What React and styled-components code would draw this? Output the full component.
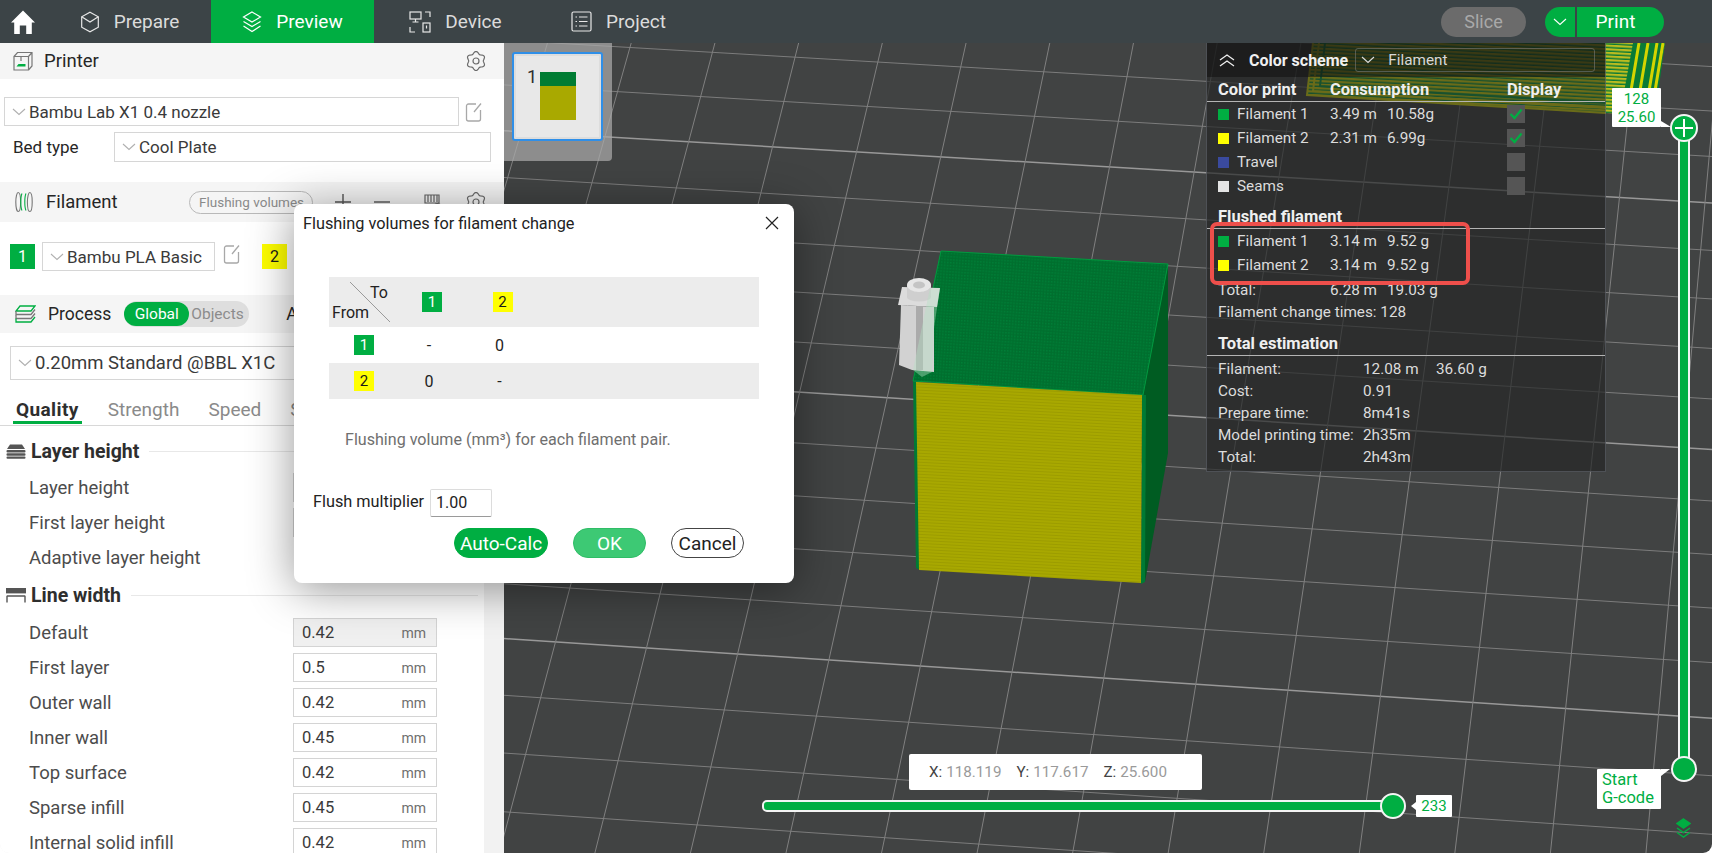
import React from "react";
import styled, { createGlobalStyle } from "styled-components";

const GREEN = "#00ae42";
const FONT = `Roboto, "Noto Sans", sans-serif`;

const Global = createGlobalStyle`
  html, body { margin: 0; padding: 0; background: #fff; overflow: hidden; }
  body { font-family: ${FONT}; }
  * { box-sizing: border-box; }
`;

/* ---------- icons ---------- */
const gearPath = (() => {
  let d = "";
  for (let i = 0; i < 72; i++) {
    const t = (i / 72) * Math.PI * 2;
    const r = 8.4 + 1.1 * Math.cos(6 * t);
    d += `${i ? "L" : "M"}${(10 + r * Math.sin(t)).toFixed(2)} ${(10 - r * Math.cos(t)).toFixed(2)}`;
  }
  return d + "Z";
})();

const Gear = () => (
  <svg width="20" height="20" viewBox="0 0 20 20" fill="none" stroke="#6b6b6b" strokeWidth="1.2">
    <path d={gearPath} />
    <circle cx="10" cy="10" r="3" />
  </svg>
);

const Chevron = ({ color = "#b0b0b0" }) => (
  <svg width="14" height="8" viewBox="0 0 14 8" fill="none" stroke={color} strokeWidth="1.1">
    <path d="M1 1l6 5.5L13 1" />
  </svg>
);

const EditIcon = () => (
  <svg width="19" height="20" viewBox="0 0 19 20" fill="none" stroke="#a8a8a8" strokeWidth="1.3">
    <path d="M11 2H3.5A2 2 0 0 0 1.5 4v13a2 2 0 0 0 2 2h10a2 2 0 0 0 2-2V8" />
    <path d="M9 10l7-8.5" />
  </svg>
);

const HomeIcon = () => (
  <svg width="26" height="26" viewBox="0 0 26 26" fill="#fff">
    <path d="M13 1.5L25 13.5h-3.2V25h-5.6v-8.5H9.8V25H4.2V13.5H1z" />
  </svg>
);

const PrepareIcon = () => (
  <svg width="20" height="22" viewBox="0 0 20 22" fill="none" stroke="#e8e8e8" strokeWidth="1.2">
    <path d="M10 1.2l8.3 4.6v10.4L10 20.8l-8.3-4.6V5.8z" />
    <path d="M1.7 5.8L10 11l8.3-5.2" />
  </svg>
);

const PreviewIcon = () => (
  <svg width="20" height="22" viewBox="0 0 20 22" fill="none" stroke="#fff" strokeWidth="1.2">
    <path d="M10 1l8.5 5L10 11 1.5 6z" />
    <path d="M1.5 10.5L10 15.5l8.5-5" />
    <path d="M1.5 15L10 20.5 18.5 15" />
  </svg>
);

const DeviceIcon = () => (
  <svg width="22" height="22" viewBox="0 0 22 22" fill="none" stroke="#e8e8e8" strokeWidth="1.2">
    <rect x="1" y="1" width="11" height="7" />
    <path d="M6.5 8v3M3.5 11h6" />
    <path d="M16 1h5v5M1 16v5h5" />
    <rect x="14" y="12" width="7" height="9" />
    <path d="M17.5 14.5v3" />
  </svg>
);

const ProjectIcon = () => (
  <svg width="21" height="21" viewBox="0 0 21 21" fill="none" stroke="#e8e8e8" strokeWidth="1.2">
    <rect x="1" y="1" width="19" height="19" rx="1.5" />
    <path d="M4.5 6h1.5M8 6h8.5M4.5 10.5h1.5M8 10.5h8.5M4.5 15h1.5M8 15h8.5" />
  </svg>
);

const PrinterIcon = () => (
  <svg width="20" height="20" viewBox="0 0 20 20" fill="none" stroke="#777" strokeWidth="1.2">
    <path d="M1 5.5h14.5V19H1zM1 5.5L4.5 1.5H19v13.5l-3.5 4M15.5 5.5L19 1.5" />
    <path d="M3.5 15.5l2-2.5h7v2.5z" fill={GREEN} stroke="none" />
    <path d="M8 6v4" />
  </svg>
);

const SpoolIcon = () => (
  <svg width="18" height="22" viewBox="0 0 18 22" fill="none" stroke="#777" strokeWidth="1.1">
    <ellipse cx="3.2" cy="11" rx="2.4" ry="9.5" />
    <ellipse cx="14.8" cy="11" rx="2.4" ry="9.5" />
    <path d="M7 2.5c-1.6 3-1.6 14 0 17M11 2.5c-1.6 3-1.6 14 0 17" stroke={GREEN} />
  </svg>
);

const ProcessIcon = () => (
  <svg width="21" height="18" viewBox="0 0 21 18" fill="none" strokeWidth="1.3">
    <path d="M5 1h15l-4 5H1z" stroke={GREEN} />
    <path d="M1 6v3.5h15l4-5" stroke="#777" />
    <path d="M1 10v3.5h15l4-5" stroke="#777" />
    <path d="M1 13.5V17h15l4-5" stroke={GREEN} />
  </svg>
);

const CalibrateIcon = () => (
  <svg width="20" height="20" viewBox="0 0 20 20" fill="none" stroke="#666" strokeWidth="1.2">
    <path d="M2 3h14v8H2z" />
    <path d="M5 3v7M8 3v7M11 3v7M14 3v7" />
    <circle cx="14.5" cy="15.5" r="4" fill="#eee" />
  </svg>
);

const LayerGroupIcon = () => (
  <svg width="20" height="15" viewBox="0 0 20 15" fill="#555">
    <path d="M4 .5h12l3 4.5H1z" />
    <rect x=".5" y="6" width="19" height="2.4" rx="1" />
    <rect x=".5" y="9.3" width="19" height="2.4" rx="1" />
    <rect x=".5" y="12.4" width="19" height="2.4" rx="1" />
  </svg>
);

const LineGroupIcon = () => (
  <svg width="20" height="15" viewBox="0 0 20 15" fill="none" stroke="#555" strokeWidth="1.4">
    <rect x=".7" y=".7" width="18.6" height="4" fill="#555" />
    <path d="M.7 8h18.6M1 8v6.5M19 8v6.5" />
  </svg>
);

const CheckMark = () => (
  <svg width="14" height="12" viewBox="0 0 14 12" fill="none" stroke={GREEN} strokeWidth="2.2">
    <path d="M1.5 6l4 4 7-8.5" />
  </svg>
);

const LayersSmall = () => (
  <svg width="15" height="21" viewBox="0 0 15 21" fill="none" stroke={GREEN} strokeWidth="1.5">
    <path d="M7.5 1L14 5.5 7.5 10 1 5.5z" fill={GREEN} />
    <path d="M1 10l6.5 4.5L14 10" />
    <path d="M1 14.5L7.5 19l6.5-4.5" />
  </svg>
);

/* ---------- shell ---------- */
const Page = styled.div`
  width: 1712px;
  height: 853px;
  position: relative;
  display: flex;
  flex-direction: column;
  overflow: hidden;
  border-radius: 0 0 9px 9px;
  font-family: ${FONT};
`;

const TopBar = styled.header`
  height: 43px;
  flex: none;
  display: flex;
  align-items: center;
  background: #3c4447;
`;

const HomeButton = styled.div`
  width: 48px;
  height: 43px;
  display: flex;
  align-items: center;
  padding-left: 10px;
`;

const Tab = styled.div`
  width: 163px;
  height: 43px;
  display: flex;
  align-items: center;
  justify-content: center;
  gap: 14px;
  font-size: 19px;
  color: ${(p) => (p.$active ? "#fff" : "#dcdcdc")};
  background: ${(p) => (p.$active ? GREEN : "transparent")};
`;

const TopActions = styled.div`
  margin-left: auto;
  padding-right: 48px;
  display: flex;
  align-items: center;
  gap: 19px;
`;

const SliceButton = styled.div`
  width: 85px;
  height: 30px;
  border-radius: 15px;
  background: #6b6b6b;
  color: #a9a9a9;
  font-size: 18px;
  display: flex;
  align-items: center;
  justify-content: center;
`;

const PrintButton = styled.div`
  width: 119px;
  height: 30px;
  display: flex;
  gap: 2px;
  color: #fff;
  font-size: 19px;
`;

const PrintDrop = styled.div`
  width: 30px;
  background: ${GREEN};
  border-radius: 15px 0 0 15px;
  display: flex;
  align-items: center;
  justify-content: center;
`;

const PrintMain = styled.div`
  flex: 1;
  background: ${GREEN};
  border-radius: 0 15px 15px 0;
  display: flex;
  align-items: center;
  justify-content: center;
  padding-right: 10px;
`;

const Main = styled.div`
  flex: 1;
  display: flex;
  min-height: 0;
`;

/* ---------- sidebar ---------- */
const Sidebar = styled.aside`
  width: 504px;
  flex: none;
  background: #fff;
  overflow: hidden;
  color: #2e2e2e;
`;

const SectionHeader = styled.div`
  height: ${(p) => p.$h}px;
  display: flex;
  align-items: center;
  padding: 0 18px 0 ${(p) => p.$pl}px;
  gap: ${(p) => p.$gap}px;
  background: #f5f5f5;
  font-size: ${(p) => p.$fs || 18.5}px;
  color: #262626;
`;

const HeaderActions = styled.div`
  margin-left: auto;
  display: flex;
  align-items: center;
`;

const ActionSlot = styled.div`
  margin-left: ${(p) => p.$ml || 0}px;
  display: flex;
  align-items: center;
`;

const FlushPill = styled.div`
  width: 124px;
  height: 23px;
  border: 1px solid #b9b9b9;
  border-radius: 12px;
  font-size: 13.5px;
  color: #8a8a8a;
  display: flex;
  align-items: center;
  padding-left: 9px;
  white-space: nowrap;
`;

const PrinterBody = styled.div`
  padding: 18px 0 20px 4px;
  display: flex;
  flex-direction: column;
  gap: 6px;
`;

const FormRow = styled.div`
  display: flex;
  align-items: center;
`;

const Combo = styled.div`
  width: ${(p) => p.$w}px;
  height: ${(p) => p.$h || 30}px;
  flex: none;
  margin: ${(p) => p.$m || 0};
  border: 1px solid #d6d6d6;
  display: flex;
  align-items: center;
  gap: 3px;
  padding-left: 7px;
  font-size: ${(p) => p.$fs || 17}px;
  color: #3a3a3a;
  white-space: nowrap;
  background: #fff;
`;

const EditSlot = styled.div`
  margin-left: ${(p) => p.$ml}px;
  display: flex;
`;

const BedLabel = styled.div`
  width: 110px;
  padding-left: 9px;
  font-size: 17px;
  color: #262626;
`;

const FilamentBody = styled.div`
  height: 73px;
  padding: 22px 0 0 10px;
  display: flex;
  align-items: flex-start;
`;

const Badge = styled.div`
  width: ${(p) => p.$size || 25}px;
  height: ${(p) => p.$size || 25}px;
  flex: none;
  margin-left: ${(p) => p.$ml || 0}px;
  display: flex;
  align-items: center;
  justify-content: center;
  font-size: ${(p) => (p.$size ? 15 : 16)}px;
  background: ${(p) => (p.$n === 1 ? GREEN : "#ffff00")};
  color: ${(p) => (p.$n === 1 ? "#fff" : "#1a1a1a")};
`;

const ModeToggle = styled.div`
  width: 125px;
  height: 26px;
  margin-left: 1px;
  border-radius: 13px;
  background: #dedede;
  display: flex;
  align-items: center;
  font-size: 15.5px;
  color: #8c8c8c;
`;

const ModeOn = styled.div`
  width: 65px;
  height: 24px;
  border-radius: 12px;
  background: ${GREEN};
  color: #fff;
  display: flex;
  align-items: center;
  justify-content: center;
  margin-right: 2px;
`;

const ModeNext = styled.span`
  margin-left: 25px;
`;

const ProcessBody = styled.div`
  display: flex;
  background: #f2f2f2;
`;

const ProcessMain = styled.div`
  width: 484px;
  background: #fff;
`;

const PresetWrap = styled.div`
  padding: 13px 0 0 10px;
`;

const TabRow = styled.div`
  height: 46px;
  padding-left: 13px;
  display: flex;
  align-items: flex-end;
  gap: 23px;
  border-bottom: 1px solid #d8d8d8;
`;

const SubTab = styled.div`
  height: 32px;
  padding: 7px 3px 0;
  font-size: 19px;
  line-height: 22px;
  font-weight: ${(p) => (p.$active ? 700 : 400)};
  letter-spacing: ${(p) => (p.$active ? 0.4 : 0)}px;
  color: ${(p) => (p.$active ? "#2e2e2e" : "#8a8a8a")};
  border-bottom: 3px solid ${(p) => (p.$active ? GREEN : "transparent")};
  margin-bottom: 1px;
  white-space: nowrap;
`;

const GroupTitle = styled.div`
  height: ${(p) => p.$h}px;
  margin-top: ${(p) => p.$mt}px;
  padding: 0 6px;
  display: flex;
  align-items: center;
  gap: 5px;
  font-size: 19.5px;
  font-weight: 700;
  color: #2e2e2e;
  white-space: nowrap;
  &::after {
    content: "";
    flex: 1;
    height: 1px;
    background: #e8e8e8;
    margin-left: 5px;
  }
`;

const OptionRow = styled.div`
  height: 35px;
  padding-left: 29px;
  display: grid;
  grid-template-columns: 264px 144px;
  align-items: center;
  font-size: 18.5px;
  color: #4c4c4c;
`;

const NumberField = styled.div`
  height: 29px;
  border: 1px solid #d4d4d4;
  background: ${(p) => (p.$muted ? "#f0f0f0" : "#fff")};
  padding: 0 10px 0 8px;
  display: flex;
  align-items: center;
  justify-content: space-between;
  font-size: 16.5px;
  color: #3a3a3a;
`;

const Unit = styled.span`
  font-size: 14px;
  color: #6e6e6e;
`;

/* ---------- 3d view ---------- */
const Canvas = styled.section`
  flex: 1;
  position: relative;
  overflow: hidden;
  background: #414343;
`;

const Scene = styled.svg`
  position: absolute;
  inset: 0;
  width: 100%;
  height: 100%;
`;

const ThumbPanel = styled.div`
  position: absolute;
  left: 0;
  top: 0;
  width: 108px;
  height: 118px;
  background: rgba(170, 170, 170, 0.72);
  border-radius: 0 0 4px 0;
  padding: 9px 0 0 8px;
`;

const ThumbFrame = styled.div`
  width: 91px;
  height: 89px;
  border: 2px solid #2f8fe8;
  border-radius: 3px;
  background: #e8e8e8;
  padding: 18px 0 0 13px;
  display: flex;
  gap: 3px;
  font-size: 18px;
  color: #2e2e2e;
  line-height: 1;
  box-shadow: inset 0 0 0 2px #ddd;
`;

const ThumbNumber = styled.span`
  margin-top: -4px;
`;

const ThumbBar = styled.div`
  width: 36px;
  height: 48px;
  background: linear-gradient(#007c33 0 14px, #a9a900 14px);
`;

const StatsPanel = styled.div`
  position: absolute;
  left: 702px;
  top: 0;
  width: 400px;
  height: 429px;
  background: rgba(36, 37, 37, 0.68);
  border: 1px solid rgba(120, 125, 135, 0.45);
  border-top: 0;
  color: #dcdcdc;
  font-size: 15.3px;
`;

const StatsTop = styled.div`
  height: 34px;
  background: rgba(16, 16, 16, 0.55);
  display: flex;
  align-items: center;
  padding-left: 11px;
  font-size: 16px;
  font-weight: 700;
  color: #f0f0f0;
`;

const SchemeSelect = styled.div`
  width: 240px;
  height: 24px;
  margin-left: 7px;
  border: 1px solid rgba(130, 130, 130, 0.55);
  border-radius: 3px;
  display: flex;
  align-items: center;
  gap: 13px;
  padding-left: 5px;
  font-size: 15.3px;
  font-weight: 400;
  color: #d8d8d8;
`;

const StatsHead = styled.div`
  height: 25px;
  margin-top: ${(p) => p.$mt || 0}px;
  padding-left: 11px;
  border-bottom: 1px solid #b4b4b4;
  display: ${(p) => (p.$cols ? "grid" : "flex")};
  grid-template-columns: 112px 177px auto;
  align-items: center;
  font-size: 16.5px;
  font-weight: 700;
  color: #efefef;
`;

const LegendRow = styled.div`
  height: 24px;
  padding-left: 11px;
  display: grid;
  grid-template-columns: 19px 93px 57px 120px 18px;
  align-items: center;
`;

const Swatch = styled.span`
  width: 11px;
  height: 11px;
  background: ${(p) => p.$c};
`;

const DisplayBox = styled.span`
  width: 18px;
  height: 18px;
  background: #555;
  display: flex;
  align-items: center;
  justify-content: center;
`;

const TotalRow = styled.div`
  height: 22px;
  margin-top: 2px;
  padding-left: 11px;
  display: grid;
  grid-template-columns: 112px 57px 1fr;
  align-items: center;
`;

const PlainRow = styled.div`
  height: 22px;
  padding-left: 11px;
  display: flex;
  align-items: center;
`;

const EstimateList = styled.div`
  padding-top: 2px;
`;

const EstimateRow = styled.div`
  height: 22px;
  padding-left: 11px;
  display: grid;
  grid-template-columns: 145px 73px 1fr;
  align-items: center;
`;

const Highlight = styled.div`
  position: absolute;
  left: 3px;
  top: 179px;
  width: 260px;
  height: 63px;
  border: 4px solid #ee4f4b;
  border-radius: 7px;
`;

const VTrack = styled.div`
  position: absolute;
  left: 1174px;
  top: 85px;
  width: 12px;
  height: 641px;
  background: ${GREEN};
  border: 2px solid #f4f4f4;
`;

const Thumb = styled.div`
  position: absolute;
  left: ${(p) => p.$x}px;
  top: ${(p) => p.$y}px;
  width: ${(p) => p.$d}px;
  height: ${(p) => p.$d}px;
  border-radius: 50%;
  background: ${GREEN};
  border: 2px solid #f4f4f4;
  display: flex;
  align-items: center;
  justify-content: center;
`;

const SliderTag = styled.div`
  position: absolute;
  left: ${(p) => p.$x}px;
  top: ${(p) => p.$y}px;
  width: ${(p) => p.$w}px;
  height: ${(p) => p.$h}px;
  background: #fff;
  color: ${GREEN};
  font-size: ${(p) => p.$fs || 15}px;
  line-height: 18px;
  white-space: pre-line;
  text-align: ${(p) => p.$align || "center"};
  padding: ${(p) => p.$pad || "2px 0 0 0"};
  border-radius: 1px;
`;

const TagTail = styled.i`
  position: absolute;
  width: 0;
  height: 0;
  ${(p) => p.$css}
`;

const HTrack = styled.div`
  position: absolute;
  left: 258px;
  top: 757px;
  width: 630px;
  height: 12px;
  background: ${GREEN};
  border: 2px solid #f4f4f4;
  border-radius: 5px 0 0 5px;
`;

const CoordBox = styled.div`
  position: absolute;
  left: 405px;
  top: 711px;
  width: 293px;
  height: 36px;
  background: #fff;
  border-radius: 2px;
  display: flex;
  align-items: center;
  padding-left: 20px;
  gap: 15px;
  font-size: 15.2px;
  color: #9a9a9a;
`;

const CoordKey = styled.span`
  color: #444;
  margin-right: 4px;
`;

const LayerToggle = styled.div`
  position: absolute;
  left: 1172px;
  top: 775px;
  display: flex;
`;

/* ---------- dialog ---------- */
const Dialog = styled.div`
  position: absolute;
  left: 294px;
  top: 204px;
  width: 500px;
  height: 379px;
  background: #fff;
  border-radius: 8px;
  box-shadow: 0 6px 46px rgba(0, 0, 0, 0.42);
  color: #222;
`;

const DialogTitle = styled.div`
  height: 38px;
  padding: 0 15px 0 9px;
  display: flex;
  align-items: center;
  justify-content: space-between;
  font-size: 16.3px;
`;

const FlushTable = styled.div`
  margin: 35px 0 0 35px;
  width: 430px;
`;

const FlushRow = styled.div`
  height: ${(p) => p.$h}px;
  display: grid;
  grid-template-columns: 70px 60px 81px 1fr;
  align-items: center;
  background: ${(p) => (p.$shade ? "#ececec" : "transparent")};
  font-size: 16px;
  color: #222;
`;

const CellCenter = styled.div`
  display: flex;
  justify-content: center;
  padding-left: ${(p) => p.$pl || 0}px;
`;

const CornerCell = styled.div`
  position: relative;
  height: 50px;
  font-size: 16px;
  line-height: 20px;
  padding-top: 6px;
`;

const CornerTo = styled.div`
  padding-left: 41px;
`;

const CornerFrom = styled.div`
  padding-left: 3px;
`;

const CornerLine = styled.svg`
  position: absolute;
  left: 0;
  top: 0;
`;

const Hint = styled.div`
  margin: 32px 0 0 51px;
  height: 18px;
  line-height: 18px;
  font-size: 16.1px;
  color: #6f6f6f;
`;

const FlushField = styled.div`
  margin: 36px 0 0 19px;
  display: flex;
  align-items: center;
  gap: 6px;
  font-size: 16.3px;
`;

const FlushInput = styled.div`
  width: 62px;
  height: 28px;
  margin-top: 4px;
  border: 1px solid #dcdcdc;
  border-bottom-color: #9a9a9a;
  border-radius: 2px;
  padding: 3px 0 0 5px;
  font-size: 16px;
`;

const DialogActions = styled.div`
  margin-top: 11px;
  padding-right: 50px;
  display: flex;
  justify-content: flex-end;
  gap: 25px;
`;

const DialogButton = styled.div`
  width: ${(p) => p.$w}px;
  height: 30px;
  border-radius: 15px;
  display: flex;
  align-items: center;
  justify-content: center;
  font-size: 19px;
  background: ${(p) => p.$bg};
  color: ${(p) => p.$fg};
  border: 1px solid ${(p) => p.$line};
`;

/* ---------- data ---------- */
const H_LINES = [17, 61, 106, 152, 199, 247, 296, 346, 396, 447, 500, 553, 607, 662, 719, 777, 836];
const V_LINES = [-8, -7, -6, -5, -4, -3, -2, -1, 0, 1, 2, 3, 4, 5, 6, 7, 8, 9];

const hLine = (y, i) => {
  const s = 0.058 + (y / 836) * 0.01;
  const bold = i % 5 === 3;
  return (
    <line key={`h${i}`} x1="504" x2="1712" y1={y + (504 - 860) * s} y2={y + (1712 - 860) * s}
      stroke={bold ? "#989898" : "#7c7c7c"} strokeWidth={bold ? 1.5 : 1} />
  );
};

const vLine = (k) => {
  const at = (y) => 1013 + 86.3 * k + ((y - 220) * (-81 + 5.7 * k)) / 390;
  return <line key={`v${k}`} y1="43" y2="853" x1={at(43)} x2={at(853)} stroke="#808080" strokeWidth="1" />;
};

const World = () => (
  <Scene viewBox="504 43 1208 810" preserveAspectRatio="none">
    <defs>
      <pattern id="topHatch" width="3" height="3" patternUnits="userSpaceOnUse" patternTransform="rotate(4)">
        <rect width="3" height="3" fill="#006f2e" />
        <rect width="1.5" height="1.5" fill="#007f37" />
      </pattern>
      <pattern id="frontHatch" width="4" height="3" patternUnits="userSpaceOnUse" patternTransform="rotate(3)">
        <rect width="4" height="3" fill="#a8a800" />
        <rect y="2" width="4" height="1" fill="#9c9c00" />
      </pattern>
      {/* full filament colours: the stats panel dims these by about two thirds */}
      <pattern id="towerBands" width="4" height="3.6" patternUnits="userSpaceOnUse" patternTransform="rotate(3)">
        <rect width="4" height="3.6" fill={GREEN} />
        <rect width="4" height="2.2" fill="#ffff00" />
      </pattern>
      <pattern id="towerBandsOpen" width="4" height="3.6" patternUnits="userSpaceOnUse" patternTransform="rotate(3)">
        <rect width="4" height="3.6" fill="#0a7a36" />
        <rect width="4" height="2.2" fill="#bcbc20" />
      </pattern>
    </defs>
    {H_LINES.map(hLine)}
    {V_LINES.map(vLine)}

    {/* wipe tower running off the top of the view */}
    <polygon points="1313,43 1307,95 1607,113 1607,43" fill="url(#towerBands)" />
    <polygon points="1606,43 1606,113 1653,116 1665,43" fill="url(#towerBandsOpen)" />
    <polyline points="1313,43 1307,95 1606,113" fill="none" stroke="#ffff00" strokeWidth="2" />
    <polyline points="1319,43 1313,91 1606,108" fill="none" stroke="#ffff00" strokeWidth="2" />
    <polyline points="1325,43 1320,86 1606,103" fill="none" stroke={GREEN} strokeWidth="2" />
    <polygon points="1633,43 1665,43 1655,116 1620,114" fill="#0a7a36" />
    <path d="M1639 43l-12 71M1648 43l-12 71M1657 43l-12 72M1663 43l-12 72" stroke="#d4d400" strokeWidth="3" />

    {/* sliced model */}
    <polygon points="1168,264 1168,453 1145,582 1143,395" fill="#005c22" />
    <polygon points="913,381 917,382 920,570 916,568" fill="#007a34" />
    <polygon points="1142,395 1146,395 1145,582 1141,584" fill="#007a34" />
    <polygon points="941,251 1168,264 1143,395 913,381" fill="url(#topHatch)" stroke="#009a3f" strokeWidth="1" />
    <polygon points="916,382 1142,395 1141,583 919,570" fill="url(#frontHatch)" />

    {/* purge block with the translucent plane over it */}
    <polygon points="902,287 940,288 937,307 898,305" fill="#dcdcdc" />
    <polygon points="901,305 934,307 934,372 912,370 899,365" fill="#d2d2d2" />
    <polygon points="916,306 923,306 923,370 916,370" fill="#ababab" />
    <rect x="907" y="285" width="24" height="12" fill="#cfcfcf" />
    <ellipse cx="919" cy="297" rx="12" ry="4.5" fill="#cfcfcf" />
    <ellipse cx="919" cy="285" rx="12" ry="7" fill="#e6e6e6" />
    <ellipse cx="919" cy="285" rx="6" ry="3.6" fill="#c4c4c4" />
    <polygon points="930,288 940,288 934,328 932,372 922,377 913,370" fill="#b4e0c4" fillOpacity="0.42" />
  </Scene>
);

const legend = [
  [GREEN, "Filament 1", "3.49 m", "10.58g", true],
  ["#ffff00", "Filament 2", "2.31 m", "6.99g", true],
  ["#3a4a9e", "Travel", "", "", false],
  ["#e4e4e4", "Seams", "", "", false],
];

const flushed = [
  [GREEN, "Filament 1"],
  ["#ffff00", "Filament 2"],
];

const estimate = [
  ["Filament:", "12.08 m", "36.60 g"],
  ["Cost:", "0.91", ""],
  ["Prepare time:", "8m41s", ""],
  ["Model printing time:", "2h35m", ""],
  ["Total:", "2h43m", ""],
];

const lineWidths = [
  ["Default", "0.42", true],
  ["First layer", "0.5"],
  ["Outer wall", "0.42"],
  ["Inner wall", "0.45"],
  ["Top surface", "0.42"],
  ["Sparse infill", "0.45"],
  ["Internal solid infill", "0.42"],
];

export default function App() {
  return (
    <Page>
      <Global />
      <TopBar>
        <HomeButton><HomeIcon /></HomeButton>
        <Tab><PrepareIcon />Prepare</Tab>
        <Tab $active><PreviewIcon />Preview</Tab>
        <Tab><DeviceIcon />Device</Tab>
        <Tab><ProjectIcon />Project</Tab>
        <TopActions>
          <SliceButton>Slice</SliceButton>
          <PrintButton>
            <PrintDrop><Chevron color="#fff" /></PrintDrop>
            <PrintMain>Print</PrintMain>
          </PrintButton>
        </TopActions>
      </TopBar>

      <Main>
        <Sidebar>
          <SectionHeader $h={36} $pl={13} $gap={11}>
            <PrinterIcon />Printer
            <HeaderActions><Gear /></HeaderActions>
          </SectionHeader>
          <PrinterBody>
            <FormRow>
              <Combo $w={455} $h={29}><Chevron />Bambu Lab X1 0.4 nozzle</Combo>
              <EditSlot $ml={6}><EditIcon /></EditSlot>
            </FormRow>
            <FormRow>
              <BedLabel>Bed type</BedLabel>
              <Combo $w={377}><Chevron />Cool Plate</Combo>
            </FormRow>
          </PrinterBody>

          <SectionHeader $h={40} $pl={15} $gap={13}>
            <SpoolIcon />Filament
            <HeaderActions>
              <FlushPill>Flushing volumes</FlushPill>
              <ActionSlot $ml={22}>
                <svg width="16" height="16" viewBox="0 0 16 16" stroke="#555" strokeWidth="1.4"><path d="M8 0v16M0 8h16" /></svg>
              </ActionSlot>
              <ActionSlot $ml={23}>
                <svg width="16" height="16" viewBox="0 0 16 16" stroke="#555" strokeWidth="1.4"><path d="M0 8h16" /></svg>
              </ActionSlot>
              <ActionSlot $ml={33}><CalibrateIcon /></ActionSlot>
              <ActionSlot $ml={23}><Gear /></ActionSlot>
            </HeaderActions>
          </SectionHeader>
          <FilamentBody>
            <Badge $n={1}>1</Badge>
            <Combo $w={173} $h={29} $m="-2px 0 0 7px"><Chevron />Bambu PLA Basic</Combo>
            <EditSlot $ml={8}><EditIcon /></EditSlot>
            <Badge $n={2} $ml={20}>2</Badge>
          </FilamentBody>

          <SectionHeader $h={38} $pl={15} $gap={12} $fs={17.5}>
            <ProcessIcon />Process
            <ModeToggle><ModeOn>Global</ModeOn>Objects</ModeToggle>
            <ModeNext>A</ModeNext>
          </SectionHeader>
          <ProcessBody>
            <ProcessMain>
              <PresetWrap>
                <Combo $w={420} $h={34} $fs={18.5}><Chevron />0.20mm Standard @BBL X1C</Combo>
              </PresetWrap>
              <TabRow>
                <SubTab $active>Quality</SubTab>
                <SubTab>Strength</SubTab>
                <SubTab>Speed</SubTab>
                <SubTab>Support</SubTab>
              </TabRow>
              <GroupTitle $mt={6} $h={38}><LayerGroupIcon />Layer height</GroupTitle>
              <OptionRow>Layer height<NumberField /></OptionRow>
              <OptionRow>First layer height<NumberField /></OptionRow>
              <OptionRow>Adaptive layer height</OptionRow>
              <GroupTitle $mt={1} $h={39}><LineGroupIcon />Line width</GroupTitle>
              {lineWidths.map(([label, value, muted]) => (
                <OptionRow key={label}>
                  {label}
                  <NumberField $muted={muted}>{value}<Unit>mm</Unit></NumberField>
                </OptionRow>
              ))}
            </ProcessMain>
          </ProcessBody>
        </Sidebar>

        <Canvas>
          <World />
          <ThumbPanel>
            <ThumbFrame><ThumbNumber>1</ThumbNumber><ThumbBar /></ThumbFrame>
          </ThumbPanel>

          <StatsPanel>
            <StatsTop>
              <svg width="18" height="14" viewBox="0 0 18 14" fill="none" stroke="#eee" strokeWidth="1.3" style={{ marginRight: 13 }}>
                <path d="M2 7l7-5 7 5M2 13l7-5 7 5" />
              </svg>
              Color scheme
              <SchemeSelect><Chevron color="#ddd" />Filament</SchemeSelect>
            </StatsTop>
            <StatsHead $cols>
              <span>Color print</span><span>Consumption</span><span>Display</span>
            </StatsHead>
            {legend.map(([c, name, len, wt, on]) => (
              <LegendRow key={name}>
                <Swatch $c={c} />
                <span>{name}</span>
                <span>{len}</span>
                <span>{wt}</span>
                <DisplayBox>{on && <CheckMark />}</DisplayBox>
              </LegendRow>
            ))}
            <StatsHead $mt={6}>Flushed filament</StatsHead>
            {flushed.map(([c, name]) => (
              <LegendRow key={name}>
                <Swatch $c={c} />
                <span>{name}</span>
                <span>3.14 m</span>
                <span>9.52 g</span>
              </LegendRow>
            ))}
            <TotalRow><span>Total:</span><span>6.28 m</span><span>19.03 g</span></TotalRow>
            <PlainRow>Filament change times: 128</PlainRow>
            <StatsHead $mt={8}>Total estimation</StatsHead>
            <EstimateList>
              {estimate.map(([k, a, b]) => (
                <EstimateRow key={k}><span>{k}</span><span>{a}</span><span>{b}</span></EstimateRow>
              ))}
            </EstimateList>
            <Highlight />
          </StatsPanel>

          <VTrack />
          <Thumb $x={1166} $y={71} $d={28}>
            <svg width="18" height="18" viewBox="0 0 18 18" stroke="#fff" strokeWidth="2"><path d="M9 0v18M0 9h18" /></svg>
          </Thumb>
          <SliderTag $x={1108} $y={45} $w={49} $h={39}>
            128{"\n"}25.60
            <TagTail $css="right: -10px; bottom: 0; border-left: 10px solid #fff; border-bottom: 6px solid transparent; transform: scaleY(-1);" />
          </SliderTag>
          <Thumb $x={1167} $y={713} $d={26} />
          <SliderTag $x={1093} $y={726} $w={64} $h={40} $align="left" $pad="2px 0 0 5px" $fs={16.5}>
            Start{"\n"}G-code
            <TagTail $css="right: -9px; top: 0; border-left: 9px solid #fff; border-top: 7px solid transparent; transform: scaleY(-1);" />
          </SliderTag>
          <LayerToggle><LayersSmall /></LayerToggle>

          <CoordBox>
            <span><CoordKey>X:</CoordKey>118.119</span>
            <span><CoordKey>Y:</CoordKey>117.617</span>
            <span><CoordKey>Z:</CoordKey>25.600</span>
          </CoordBox>
          <HTrack />
          <Thumb $x={876} $y={750} $d={26} />
          <SliderTag $x={912} $y={752} $w={36} $h={22}>
            233
            <TagTail $css="left: -5px; top: 7px; border-right: 5px solid #fff; border-top: 4px solid transparent; border-bottom: 4px solid transparent;" />
          </SliderTag>
        </Canvas>
      </Main>

      <Dialog>
        <DialogTitle>
          Flushing volumes for filament change
          <svg width="14" height="14" viewBox="0 0 14 14" stroke="#222" strokeWidth="1.2"><path d="M1 1l12 12M13 1L1 13" /></svg>
        </DialogTitle>
        <FlushTable>
          <FlushRow $h={50} $shade>
            <CornerCell>
              <CornerLine width="70" height="50">
                <line x1="21" y1="5" x2="61" y2="45" stroke="#9a9a9a" strokeWidth="1" />
              </CornerLine>
              <CornerTo>To</CornerTo>
              <CornerFrom>From</CornerFrom>
            </CornerCell>
            <CellCenter $pl={6}><Badge $n={1} $size={20}>1</Badge></CellCenter>
            <CellCenter $pl={6}><Badge $n={2} $size={20}>2</Badge></CellCenter>
          </FlushRow>
          <FlushRow $h={36}>
            <CellCenter><Badge $n={1} $size={20}>1</Badge></CellCenter>
            <CellCenter>-</CellCenter>
            <CellCenter>0</CellCenter>
          </FlushRow>
          <FlushRow $h={36} $shade>
            <CellCenter><Badge $n={2} $size={20}>2</Badge></CellCenter>
            <CellCenter>0</CellCenter>
            <CellCenter>-</CellCenter>
          </FlushRow>
        </FlushTable>
        <Hint>Flushing volume (mm³) for each filament pair.</Hint>
        <FlushField>
          Flush multiplier
          <FlushInput>1.00</FlushInput>
        </FlushField>
        <DialogActions>
          <DialogButton $w={94} $bg={GREEN} $fg="#fff" $line={GREEN}>Auto-Calc</DialogButton>
          <DialogButton $w={73} $bg="#3dc974" $fg="#fff" $line="#2fbd66">OK</DialogButton>
          <DialogButton $w={73} $bg="#fff" $fg="#222" $line="#444">Cancel</DialogButton>
        </DialogActions>
      </Dialog>
    </Page>
  );
}
